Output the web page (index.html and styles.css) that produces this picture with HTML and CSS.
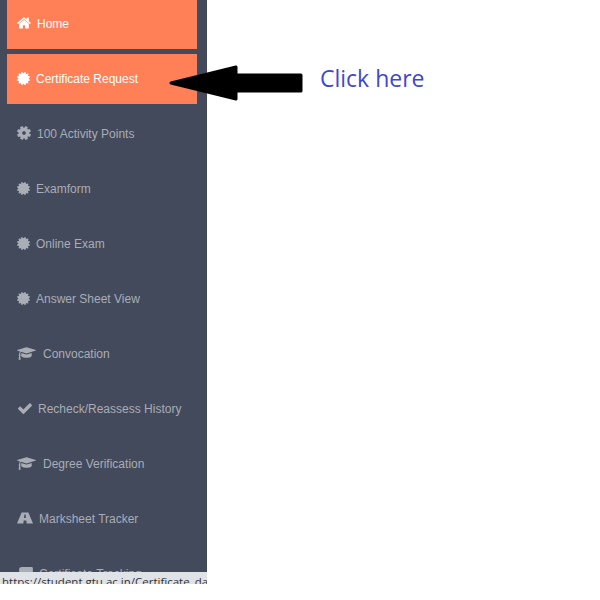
FILE: index.html
```html
<!DOCTYPE html>
<html lang="en">
<head>
  <meta charset="UTF-8">
  <title>Student Portal</title>
  <link rel="stylesheet" href="styles.css">
</head>
<body>
  <svg class="sprites" xmlns="http://www.w3.org/2000/svg">
    <symbol id="i-home" viewBox="64 224 1664 1344"><path d="M1472 992v480q0 26-19 45t-45 19h-384v-384h-256v384h-384q-26 0-45-19t-19-45v-480q0-1 .5-3t.5-3l575-474 575 474q1 2 1 6zm223-69l-62 74q-8 9-21 11h-3q-13 0-21-7l-692-577-692 577q-12 8-24 7-13-2-21-11l-62-74q-8-10-7-23.500t11-21.500l719-599q32-26 76-26t76 26l244 204v-195q0-14 9-23t23-9h192q14 0 23 9t9 23v408l219 182q10 8 11 21.500t-7 23.500z"/></symbol>
    <symbol id="i-cert" viewBox="128 128 1536 1536"><path d="M1504 896l138 135q30 28 20 70-12 41-52 51l-188 48 53 186q12 41-19 70-29 31-70 19l-186-53-48 188q-10 40-51 52-12 2-19 2-31 0-51-22l-135-138-135 138q-28 30-70 20-41-11-51-52l-48-188-186 53q-41 12-70-19-31-29-19-70l53-186-188-48q-40-10-52-51-10-42 20-70l138-135-138-135q-30-28-20-70 12-41 52-51l188-48-53-186q-12-41 19-70 29-31 70-19l186 53 48-188q10-41 51-51 41-12 70 19l135 139 135-139q29-30 70-19 41 10 51 51l48 188 186-53q41-12 70 19 31 29 19 70l-53 186 188 48q40 10 52 51 10 42-20 70z"/></symbol>
    <symbol id="i-cog" viewBox="128 128 1536 1536"><path transform="rotate(22 896 896)" d="M1100 896q0-85-60-145t-144-59-144 59-60 145 60 145 144 59 144-59 60-145zm564-109v222q0 12-8 23t-20 13l-185 28q-19 54-39 91 35 50 107 138 10 12 10 25t-9 23q-27 37-99 108t-94 71q-12 0-26-9l-138-108q-44 23-91 38-16 136-29 186-7 28-36 28h-222q-14 0-24.500-8.500t-11.500-21.500l-28-184q-49-16-90-37l-141 107q-10 9-25 9-14 0-25-11-126-114-165-168-7-10-7-23 0-12 8-23 15-21 51-66.500t54-70.500q-27-50-41-99l-183-27q-13-2-21-12.500t-8-23.500v-222q0-12 8-23t19-13l186-28q14-46 39-92-40-57-107-138-10-12-10-24 0-10 9-23 26-36 98.500-107.500t94.500-71.500q13 0 26 10l138 107q44-23 91-38 16-136 29-186 7-28 36-28h222q14 0 24.500 8.500t11.500 21.500l28 184q49 16 90 37l142-107q9-9 24-9 13 0 25 10 129 119 165 170 7 8 7 22 0 12-8 23-15 21-51 66.500t-54 70.500q26 50 41 98l183 28q13 2 21 12.500t8 23.500z"/></symbol>
    <symbol id="i-cap" viewBox="0 256 2304 1280"><path d="M1774 836l18 316q4 69-82 128t-235 93.500-323 34.500-323-34.500-235-93.500-82-128l18-316 574 181q22 7 48 7t48-7zm530-324q0 23-22 31l-1120 352q-4 1-10 1t-10-1l-652-206q-43 34-71 111.500t-34 178.500q63 36 63 109 0 69-58 107l58 433q2 14-8 25-9 11-24 11h-192q-15 0-24-11-10-11-8-25l58-433q-58-38-58-107 0-73 65-111 11-207 98-330l-333-104q-22-8-22-31t22-31l1120-352q4-1 10-1t10 1l1120 352q22 8 22 31z"/></symbol>
    <symbol id="i-check" viewBox="121 294 1550 1228"><path d="M1671 566q0 40-28 68l-724 724-136 136q-28 28-68 28t-68-28l-136-136-362-362q-28-28-28-68t28-68l136-136q28-28 68-28t68 28l294 295 656-657q28-28 68-28t68 28l136 136q28 28 28 68z"/></symbol>
    <symbol id="i-road" viewBox="0 0 20 14"><path fill-rule="evenodd" d="M0 14L5.800 0H14.200L20 14H12L11.700 10H8.300L8 14ZM9.200 2.500L8.800 7H11.200L10.800 2.500Z"/></symbol>
    <symbol id="i-book" viewBox="0 0 16 14"><path d="M3 0H14.500Q16 0 16 1.500V14H0V3Q0 0 3 0Z"/></symbol>
  </svg>

  <div class="page">
    <nav class="sidebar">
      <ul class="menu">
        <li class="menu-item active"><svg class="icon icon-home"><use href="#i-home"/></svg>Home</li>
        <li class="menu-item active"><svg class="icon icon-cert"><use href="#i-cert"/></svg>Certificate Request</li>
        <li class="menu-item"><svg class="icon icon-cog"><use href="#i-cog"/></svg>100 Activity Points</li>
        <li class="menu-item"><svg class="icon icon-cert"><use href="#i-cert"/></svg>Examform</li>
        <li class="menu-item"><svg class="icon icon-cert"><use href="#i-cert"/></svg>Online Exam</li>
        <li class="menu-item"><svg class="icon icon-cert"><use href="#i-cert"/></svg>Answer Sheet View</li>
        <li class="menu-item"><svg class="icon icon-cap"><use href="#i-cap"/></svg>Convocation</li>
        <li class="menu-item"><svg class="icon icon-check"><use href="#i-check"/></svg>Recheck/Reassess History</li>
        <li class="menu-item"><svg class="icon icon-cap"><use href="#i-cap"/></svg>Degree Verification</li>
        <li class="menu-item"><svg class="icon icon-road"><use href="#i-road"/></svg>Marksheet Tracker</li>
        <li class="menu-item"><svg class="icon icon-book"><use href="#i-book"/></svg>Certificate Tracking</li>
      </ul>
    </nav>
    <div class="status-bar">https://student.gtu.ac.in/Certificate_dashboard.aspx</div>
  </div>

  <div class="callout">
    <svg class="arrow" width="136" height="40" viewBox="0 0 136 40">
      <path d="M2 20L67 4V12H132V28H67V36Z"/>
    </svg>
    <span class="callout-label">Click here</span>
  </div>
</body>
</html>
```

FILE: styles.css
```css
body {
  margin: 0;
  background: #fff;
  font-family: "Liberation Sans", Arial, sans-serif;
}

.sprites {
  display: none;
}

.page {
  width: 207px;
}

.sidebar {
  height: 572px;
  overflow: hidden;
  background: #434a5c;
}

.menu {
  list-style: none;
  margin: -1px 0 0;
  padding: 0 10px 0 7px;
}

.menu-item {
  display: flex;
  align-items: center;
  height: 50px;
  margin-bottom: 5px;
  padding-left: 10px;
  box-sizing: border-box;
  font-size: 12px;
  color: #a9adb6;
}

.menu-item.active {
  background: #ff7f57;
  color: #fff;
}

.icon {
  flex: none;
  fill: currentColor;
  margin-top: -2px;
}

.icon-home { width: 14px; height: 12px; margin-right: 6px; }
.icon-cert { width: 13px; height: 13px; margin-right: 6px; }
.icon-cog { width: 14px; height: 14px; margin-right: 6px; }
.icon-cap { width: 19px; height: 13px; margin-right: 7px; }
.icon-check { width: 14px; height: 11px; margin-right: 6px; margin-left: 1px; }
.icon-road { width: 16px; height: 12px; margin-right: 6px; }
.icon-book { width: 14px; height: 12px; margin-left: 2px; margin-right: 6px; }

.status-bar {
  height: 12px;
  overflow: hidden;
  padding-left: 2px;
  background: #dfe2e7;
  color: #333;
  font-family: "Open Sans", sans-serif;
  font-size: 11.500px;
  line-height: 20px;
  white-space: nowrap;
}

.callout {
  position: absolute;
  left: 169px;
  top: 63px;
  display: flex;
  gap: 15px;
}

.arrow {
  stroke: #000;
  stroke-width: 3;
  stroke-linejoin: round;
}

.callout-label {
  font-family: "Open Sans", sans-serif;
  font-size: 23px;
  line-height: 30px;
  color: #3f48cc;
}
```
